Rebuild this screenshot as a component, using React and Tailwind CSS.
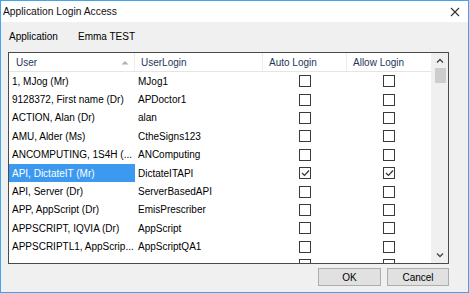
import React from 'react';

const rows = [
  { user: '1, MJog (Mr)', login: 'MJog1' },
  { user: '9128372, First name (Dr)', login: 'APDoctor1' },
  { user: 'ACTION, Alan (Dr)', login: 'alan' },
  { user: 'AMU, Alder (Ms)', login: 'CtheSigns123' },
  { user: 'ANCOMPUTING, 1S4H (...', login: 'ANComputing' },
  { user: 'API, DictateIT (Mr)', login: 'DictateITAPI', selected: true, auto: true, allow: true },
  { user: 'API, Server (Dr)', login: 'ServerBasedAPI' },
  { user: 'APP, AppScript (Dr)', login: 'EmisPrescriber' },
  { user: 'APPSCRIPT, IQVIA (Dr)', login: 'AppScript' },
  { user: 'APPSCRIPTL1, AppScrip...', login: 'AppScriptQA1' },
  { user: '', login: '' },
];

function CheckBox({ checked }) {
  return (
    <div className="w-[12px] h-[12px] border border-[#3a3a3a] bg-white flex items-center justify-center">
      {checked && (
        <svg width="9" height="8" viewBox="0 0 9 8">
          <path d="M1 4 L3.5 6.5 L8 1.5" fill="none" stroke="#333" strokeWidth="1.2" />
        </svg>
      )}
    </div>
  );
}

export default function App() {
  return (
    <div
      className="w-[469px] h-[293px] border border-[#42a5ea] bg-[#f0f0f0] flex flex-col text-[10px] text-black overflow-hidden"
      style={{ fontFamily: '"Liberation Sans", Arial, sans-serif' }}
    >
      {/* Title bar */}
      <div className="h-[21px] bg-white flex items-center justify-between pl-[2px] pr-[8px]">
        <span className="text-[10.3px] text-[#111]">Application Login Access</span>
        <svg width="10" height="10" viewBox="0 0 10 10">
          <path d="M1 1 L9 9 M9 1 L1 9" stroke="#333" strokeWidth="1.1" />
        </svg>
      </div>

      {/* Application label */}
      <div className="mt-[6px] h-[16px] flex items-center pl-[8px]">
        <span className="w-[69px]">Application</span>
        <span>Emma TEST</span>
      </div>

      {/* List */}
      <div className="mt-[8px] ml-[7px] w-[441px] h-[212px] border border-[#4a4a4a] bg-white flex overflow-hidden">
        <div className="w-[422px] flex flex-col overflow-hidden">
          <div className="h-[19px] shrink-0 flex border-b border-[#e5e5e5] text-[#26365a]">
            <div className="w-[126px] flex items-center justify-between pl-[7px] pr-[5px] border-r border-[#ececec]">
              <span>User</span>
              <svg width="8" height="5" viewBox="0 0 8 5">
                <path d="M0.5 4.5 L4 1 L7.5 4.5 Z" fill="#a9b2bf" />
              </svg>
            </div>
            <div className="w-[128px] flex items-center pl-[6px] border-r border-[#ececec]">UserLogin</div>
            <div className="w-[84px] flex items-center pl-[6px] border-r border-[#ececec]">Auto Login</div>
            <div className="w-[84px] flex items-center pl-[6px]">Allow Login</div>
          </div>
          {rows.map((r, i) => (
            <div key={i} className="h-[18.4px] shrink-0 flex items-center">
              <div
                className={`w-[126px] h-full flex items-center pl-[3px] whitespace-nowrap overflow-hidden ${
                  r.selected ? 'bg-[#3c99f0] text-white' : ''
                }`}
              >
                {r.user}
              </div>
              <div className="w-[128px] h-full flex items-center pl-[3px] whitespace-nowrap">{r.login}</div>
              <div className="w-[84px] h-full flex items-center justify-center">
                <CheckBox checked={r.auto} />
              </div>
              <div className="w-[84px] h-full flex items-center justify-center">
                <CheckBox checked={r.allow} />
              </div>
            </div>
          ))}
        </div>

        {/* Scrollbar */}
        <div className="w-[17px] bg-[#f0f0f0] flex flex-col items-center">
          <div className="h-[15px] w-full flex items-center justify-center">
            <svg width="8" height="5" viewBox="0 0 8 5">
              <path d="M1 4.5 L4 1.5 L7 4.5" fill="none" stroke="#444" strokeWidth="1.3" />
            </svg>
          </div>
          <div className="h-[15px] w-[11px] ml-[2px] bg-[#cdcdcd]" />
          <div className="flex-1" />
          <div className="h-[15px] w-full flex items-center justify-center">
            <svg width="8" height="5" viewBox="0 0 8 5">
              <path d="M1 0.5 L4 3.5 L7 0.5" fill="none" stroke="#444" strokeWidth="1.3" />
            </svg>
          </div>
        </div>
      </div>

      {/* Buttons */}
      <div className="mt-[4px] flex justify-end gap-[6px] pr-[19px]">
        <button className="w-[63px] h-[18px] bg-[#e1e1e1] border border-[#adadad] text-[10px]">OK</button>
        <button className="w-[62px] h-[18px] bg-[#e1e1e1] border border-[#adadad] text-[10px]">Cancel</button>
      </div>
    </div>
  );
}
